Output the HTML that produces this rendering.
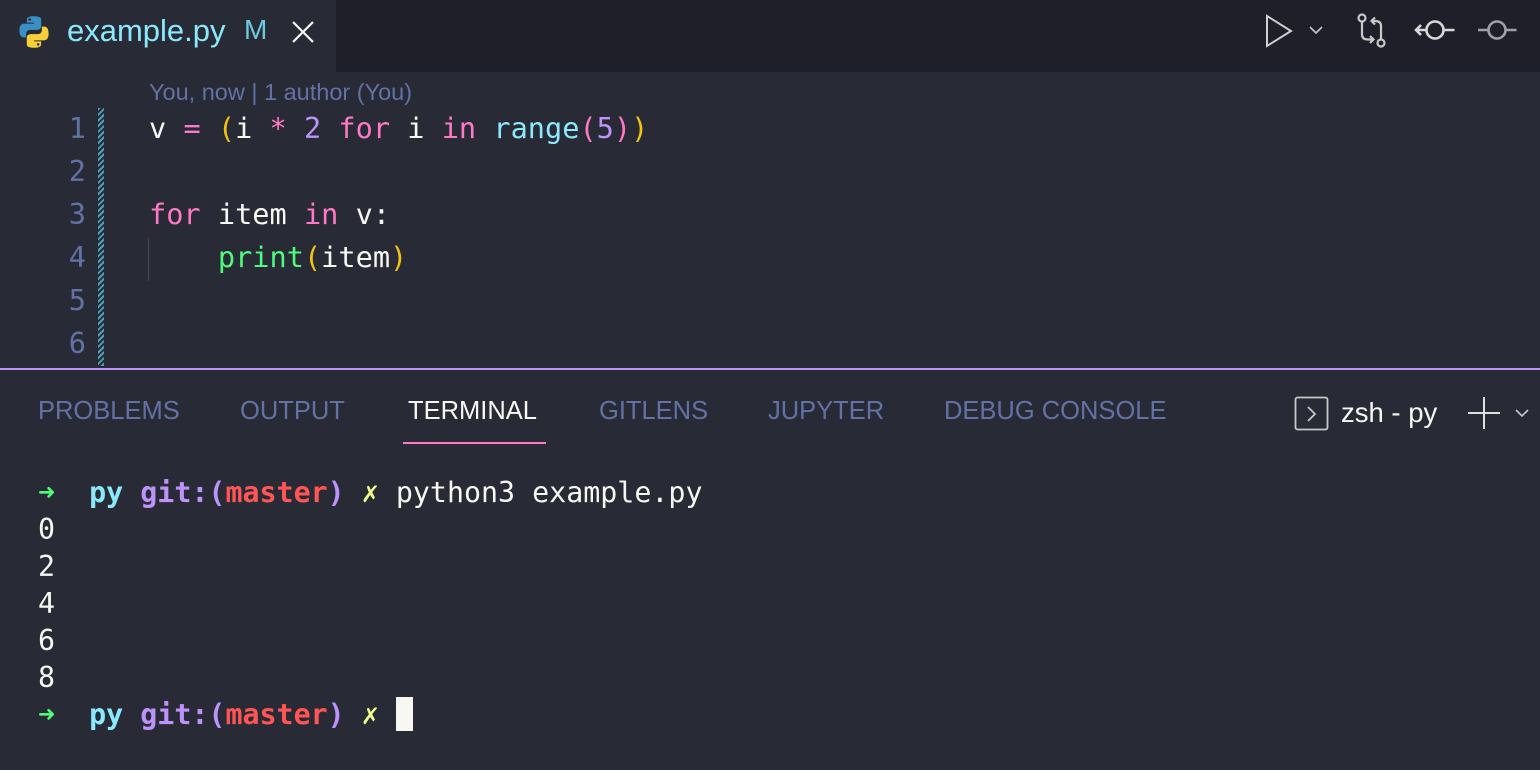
<!DOCTYPE html>
<html><head><meta charset="utf-8"><style>
*{margin:0;padding:0;box-sizing:border-box}
body{width:1540px;height:770px;background:#282a36;overflow:hidden;position:relative;font-family:"Liberation Sans",sans-serif}
.abs{position:absolute;white-space:pre}
.mono{font-family:"DejaVu Sans Mono","Liberation Mono",monospace;font-size:28.6px}
.tabbar{position:absolute;left:336px;top:0;width:1204px;height:72px;background:#1e1f29}
.ln{color:#6272a4;width:86px;text-align:right;left:0}
.k{color:#ff79c6}.w{color:#f8f8f2}.y{color:#f1c40f}.p{color:#bd93f9}.c{color:#8be9fd}.g{color:#50fa7b}
.tab{top:397px;font-size:25.5px;color:#6272a4}
</style></head><body>
<div class="tabbar"></div>
<svg class="abs" style="left:16px;top:14px" width="36" height="36" viewBox="0 0 32 32">
<path d="M15.8 2c-6.5 0-6.1 2.8-6.1 2.8v2.9h6.2v.9H7.3S3 8.1 3 14.6s3.7 6.2 3.7 6.2h2.3v-3s-.1-3.7 3.7-3.7h6.2s3.5.1 3.5-3.4V4.9S23 2 15.8 2z" fill="#3b8fc4"/>
<circle cx="12.3" cy="5" r="1.1" fill="#1e1f29"/>
<path d="M16.2 30c6.5 0 6.1-2.8 6.1-2.8v-2.9h-6.2v-.9h8.6s4.3.5 4.3-6-3.7-6.2-3.7-6.2H23v3s.1 3.7-3.7 3.7h-6.2s-3.5-.1-3.5 3.4v5.8S9 30 16.2 30z" fill="#f7d038"/>
<circle cx="19.7" cy="27" r="1.1" fill="#1e1f29"/>
</svg>
<div class="abs" style="left:67px;top:13px;font-size:31px;color:#8be9fd">example.py</div>
<div class="abs" style="left:244px;top:14px;font-size:28px;color:#6ccbe0">M</div>
<svg class="abs" style="left:291px;top:20px" width="24" height="24" viewBox="0 0 24 24"><path d="M2 2L22 22M22 2L2 22" stroke="#f8f8f2" stroke-width="2.2"/></svg>
<svg class="abs" style="left:1262px;top:14px" width="70" height="36" viewBox="0 0 70 36">
<path d="M5 2L29 17L5 32Z" fill="none" stroke="#d0d0d0" stroke-width="2"/>
<path d="M48 13l6 6 6-6" fill="none" stroke="#c8c8c8" stroke-width="1.6"/></svg>
<svg class="abs" style="left:1354px;top:11px" width="40" height="40" viewBox="0 0 40 40" fill="none" stroke="#c8c8c8" stroke-width="2.2">
<circle cx="8" cy="7" r="3.5"/><path d="M8 10.5v13c0 4 3 5 6 5h5M16 25l3.5 3.5-3.5 3.5"/>
<circle cx="27" cy="32" r="3.5"/><path d="M27 28.5V15c0-4-3-5-6-5h-3M21 6.5l-3.5 3.5 3.5 3.5"/></svg>
<svg class="abs" style="left:1414px;top:14px" width="42" height="32" viewBox="0 0 42 32" fill="none" stroke="#d8d8d8" stroke-width="2.6">
<circle cx="21" cy="16" r="8.5"/><path d="M29.5 16h11M12.5 16H3M7 11l-5 5 5 5"/></svg>
<svg class="abs" style="left:1476px;top:14px" width="42" height="32" viewBox="0 0 42 32" fill="none" stroke="#a0a0a8" stroke-width="2.6">
<circle cx="21" cy="16" r="8.5"/><path d="M29.5 16h11M12.5 16H2"/></svg>

<div class="abs" style="left:149px;top:79px;font-size:23.5px;color:#6272a4">You, now | 1 author (You)</div>
<div class="abs" style="left:98px;top:108px;width:6px;height:258px;background:repeating-linear-gradient(135deg,#4aa3b8 0 2px,transparent 2px 4px)"></div>
<div class="abs" style="left:148px;top:238px;width:1px;height:43px;background:#44475a"></div>
<div class="mono" style="position:absolute;top:107px;left:0;line-height:43px">
<div class="abs ln" style="top:0">1</div><div class="abs ln" style="top:43px">2</div><div class="abs ln" style="top:86px">3</div><div class="abs ln" style="top:129px">4</div><div class="abs ln" style="top:172px">5</div><div class="abs ln" style="top:215px">6</div>
<div class="abs w" style="left:149px;top:0">v <span class="k">=</span> <span class="y">(</span>i <span class="k">*</span> <span class="p">2</span> <span class="k">for</span> i <span class="k">in</span> <span class="c">range</span><span class="k">(</span><span class="p">5</span><span class="k">)</span><span class="y">)</span></div>
<div class="abs w" style="left:149px;top:86px"><span class="k">for</span> item <span class="k">in</span> v:</div>
<div class="abs w" style="left:149px;top:129px">    <span class="g">print</span><span class="y">(</span>item<span class="y">)</span></div>
</div>
<div class="abs" style="left:0;top:368px;width:1540px;height:2px;background:#bd93f9"></div>

<div class="abs tab" style="left:38px">PROBLEMS</div>
<div class="abs tab" style="left:240px">OUTPUT</div>
<div class="abs tab" style="left:408px;color:#f8f8f2">TERMINAL</div>
<div class="abs" style="left:403px;top:442px;width:143px;height:2px;background:#ff79c6"></div>
<div class="abs tab" style="left:599px">GITLENS</div>
<div class="abs tab" style="left:768px">JUPYTER</div>
<div class="abs tab" style="left:944px">DEBUG CONSOLE</div>
<svg class="abs" style="left:1294px;top:396px" width="36" height="36" viewBox="0 0 36 36" fill="none" stroke="#c8c8c8" stroke-width="1.8"><rect x="1.5" y="1.5" width="32" height="32" rx="2"/><path d="M14 11l7 7-7 7"/></svg>
<div class="abs" style="left:1341px;top:397px;font-size:27.5px;color:#f8f8f2">zsh - py</div>
<svg class="abs" style="left:1466px;top:395px" width="70" height="36" viewBox="0 0 70 36" fill="none" stroke="#e0e0e0" stroke-width="2"><path d="M18 2v32M2 18h32"/><path d="M50 15l6 6 6-6" stroke="#c8c8c8" stroke-width="1.6"/></svg>

<div class="mono" style="position:absolute;left:38px;top:474px;line-height:37px;color:#f8f8f2;font-size:28.3px;white-space:pre"><div><span class="g" style="font-weight:bold">➜</span>  <b class="c">py</b> <b class="p">git:(</b><b style="color:#ff5555">master</b><b class="p">)</b> <span style="color:#f1fa8c">✗</span> python3 example.py</div><div>0</div><div>2</div><div>4</div><div>6</div><div>8</div><div><span class="g" style="font-weight:bold">➜</span>  <b class="c">py</b> <b class="p">git:(</b><b style="color:#ff5555">master</b><b class="p">)</b> <span style="color:#f1fa8c">✗</span> <span style="display:inline-block;width:17px;height:34px;background:#f8f8f2;vertical-align:-7px"></span></div></div>
</body></html>
